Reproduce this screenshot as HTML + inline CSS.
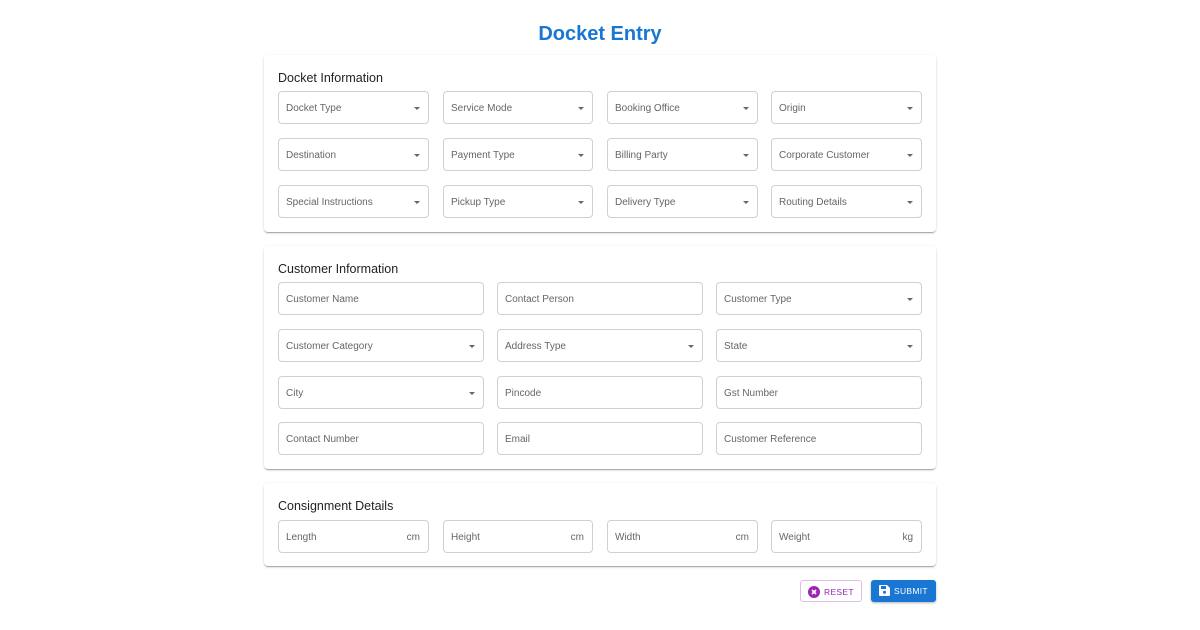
<!DOCTYPE html>
<html><head><meta charset="utf-8"><style>
*{box-sizing:border-box;margin:0;padding:0}
body{width:1200px;height:630px;background:#fff;font-family:"Liberation Sans",Arial,sans-serif;position:relative;overflow:hidden}
h1{position:absolute;top:23px;left:0;width:1200px;text-align:center;color:#1976d2;font-size:20px;font-weight:bold}
.card{position:absolute;left:264px;width:672px;background:#fff;border-radius:4px;box-shadow:0 2px 1px -1px rgba(0,0,0,.2),0 1px 1px rgba(0,0,0,.14),0 1px 3px rgba(0,0,0,.12)}
.t{position:absolute;left:14px;font-size:12.5px;color:#222}
.f{position:absolute;height:33px;border:1px solid #d0d0d0;border-radius:4px;font-size:10px;color:#666;padding-left:7px;line-height:33px}
.f.s::after{content:"";position:absolute;right:8px;top:15px;border-left:3.5px solid transparent;border-right:3.5px solid transparent;border-top:3.5px solid #666}
.u{position:absolute;right:8px;top:0}
.btn{position:absolute;top:580px;height:22px;border-radius:3px;font-size:8.5px;letter-spacing:.3px;line-height:22px}
</style></head><body>
<h1>Docket Entry</h1>
<div class="card" style="top:55px;height:177px">
<div class="t" style="top:16px">Docket Information</div>
<div class="f s" style="left:14px;top:36px;width:151px">Docket Type</div>
<div class="f s" style="left:179px;top:36px;width:150px">Service Mode</div>
<div class="f s" style="left:343px;top:36px;width:151px">Booking Office</div>
<div class="f s" style="left:507px;top:36px;width:151px">Origin</div>
<div class="f s" style="left:14px;top:83px;width:151px">Destination</div>
<div class="f s" style="left:179px;top:83px;width:150px">Payment Type</div>
<div class="f s" style="left:343px;top:83px;width:151px">Billing Party</div>
<div class="f s" style="left:507px;top:83px;width:151px">Corporate Customer</div>
<div class="f s" style="left:14px;top:130px;width:151px">Special Instructions</div>
<div class="f s" style="left:179px;top:130px;width:150px">Pickup Type</div>
<div class="f s" style="left:343px;top:130px;width:151px">Delivery Type</div>
<div class="f s" style="left:507px;top:130px;width:151px">Routing Details</div>
</div>
<div class="card" style="top:246px;height:223px">
<div class="t" style="top:16px">Customer Information</div>
<div class="f" style="left:14px;top:36px;width:206px">Customer Name</div>
<div class="f" style="left:233px;top:36px;width:206px">Contact Person</div>
<div class="f s" style="left:452px;top:36px;width:206px">Customer Type</div>
<div class="f s" style="left:14px;top:83px;width:206px">Customer Category</div>
<div class="f s" style="left:233px;top:83px;width:206px">Address Type</div>
<div class="f s" style="left:452px;top:83px;width:206px">State</div>
<div class="f s" style="left:14px;top:130px;width:206px">City</div>
<div class="f" style="left:233px;top:130px;width:206px">Pincode</div>
<div class="f" style="left:452px;top:130px;width:206px">Gst Number</div>
<div class="f" style="left:14px;top:176px;width:206px">Contact Number</div>
<div class="f" style="left:233px;top:176px;width:206px">Email</div>
<div class="f" style="left:452px;top:176px;width:206px">Customer Reference</div>
</div>
<div class="card" style="top:483px;height:83px">
<div class="t" style="top:16px">Consignment Details</div>
<div class="f" style="left:14px;top:37px;width:151px">Length<span class="u">cm</span></div>
<div class="f" style="left:179px;top:37px;width:150px">Height<span class="u">cm</span></div>
<div class="f" style="left:343px;top:37px;width:151px">Width<span class="u">cm</span></div>
<div class="f" style="left:507px;top:37px;width:151px">Weight<span class="u">kg</span></div>
</div>
<div class="btn" style="left:800px;width:62px;border:1px solid #e1bee7;color:#9c27b0;padding-left:23px">
<svg style="position:absolute;left:7px;top:5px" width="12" height="12" viewBox="0 0 12 12"><circle cx="6" cy="6" r="6" fill="#9c27b0"/><path d="M4 4L8 8M8 4L4 8" stroke="#fff" stroke-width="1.6"/></svg>RESET</div>
<div class="btn" style="left:871px;width:65px;background:#1976d2;color:#fff;padding-left:23px;box-shadow:0 1px 2px rgba(0,0,0,.3)">
<svg style="position:absolute;left:8px;top:5px" width="11" height="11" viewBox="0 0 11 11"><path d="M0 1a1 1 0 011-1h7l3 3v7a1 1 0 01-1 1H1a1 1 0 01-1-1z" fill="#fff"/><rect x="2" y="1" width="5" height="3" fill="#1976d2"/><circle cx="5.5" cy="7.3" r="1.5" fill="#1976d2"/></svg>SUBMIT</div>
</body></html>
